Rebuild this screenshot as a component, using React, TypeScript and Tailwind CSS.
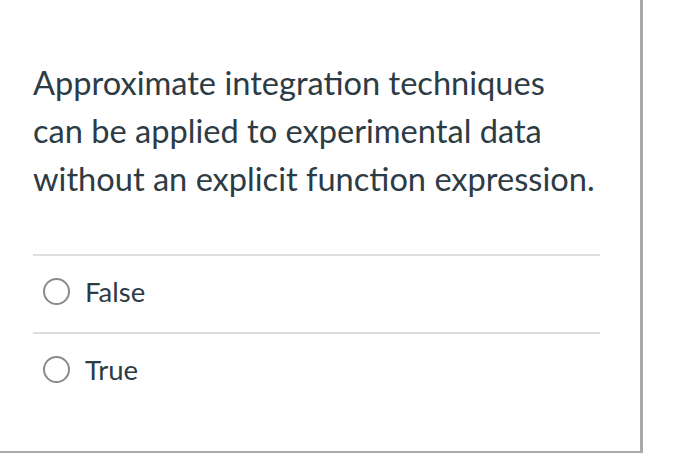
const options = ["False", "True"];

const Radio = () => (
  <span className="w-[27px] h-[27px] rounded-full border-[2.5px] border-[#8a8a8a] bg-white shrink-0" />
);

export default function App() {
  return (
    <div className="w-[700px] h-[457px] bg-white font-['Lato',sans-serif] text-[#2d3b45]">
      <div className="w-[643px] h-[453px] border-r-[3px] border-b-[2px] border-[#a9a9a9] pl-[33px] pr-[40px] pt-[59px]">
        <p className="text-[32.6px] leading-[48px]">
          Approximate integration techniques
          <br />
          can be applied to experimental data
          <br />
          without an explicit function expression.
        </p>

        <div className="mt-[51px]">
          {options.map((o) => (
            <div key={o} className="border-t-2 border-[#dedede] h-[78px] flex items-center gap-[15px] pl-[10px] pb-[5px]">
              <Radio />
              <span className="text-[27.5px]">{o}</span>
            </div>
          ))}
        </div>
      </div>
    </div>
  );
}
